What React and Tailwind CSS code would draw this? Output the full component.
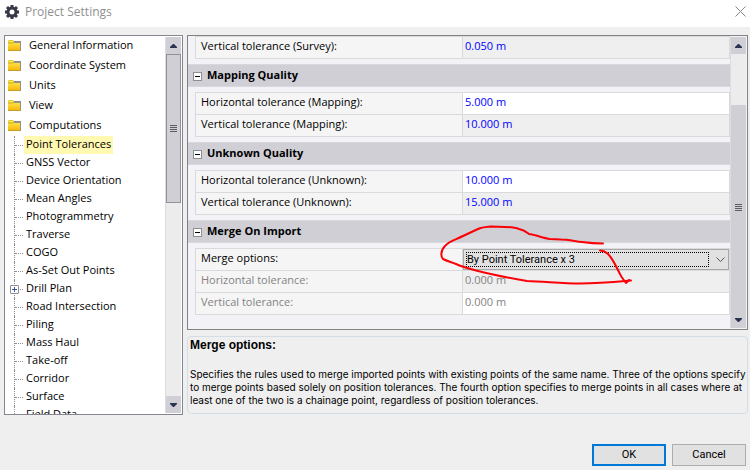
import { useState } from "react";

const folders = [
  "General Information",
  "Coordinate System",
  "Units",
  "View",
  "Computations",
];

const computations = [
  { name: "Point Tolerances" },
  { name: "GNSS Vector" },
  { name: "Device Orientation" },
  { name: "Mean Angles" },
  { name: "Photogrammetry" },
  { name: "Traverse" },
  { name: "COGO" },
  { name: "As-Set Out Points" },
  { name: "Drill Plan", expandable: true },
  { name: "Road Intersection" },
  { name: "Piling" },
  { name: "Mass Haul" },
  { name: "Take-off" },
  { name: "Corridor" },
  { name: "Surface" },
  { name: "Field Data" },
];

const groups = [
  {
    rows: [{ label: "Vertical tolerance (Survey):", value: "0.050 m", shaded: true }],
  },
  {
    title: "Mapping Quality",
    rows: [
      { label: "Horizontal tolerance (Mapping):", value: "5.000 m" },
      { label: "Vertical tolerance (Mapping):", value: "10.000 m", shaded: true },
    ],
  },
  {
    title: "Unknown Quality",
    rows: [
      { label: "Horizontal tolerance (Unknown):", value: "10.000 m" },
      { label: "Vertical tolerance (Unknown):", value: "15.000 m", shaded: true },
    ],
  },
  {
    title: "Merge On Import",
    rows: [
      { label: "Merge options:", options: ["By Point Tolerance x 3"] },
      { label: "Horizontal tolerance:", value: "0.000 m", shaded: true, disabled: true },
      { label: "Vertical tolerance:", value: "0.000 m", disabled: true },
    ],
  },
];

function GearIcon() {
  return (
    <svg viewBox="0 0 16 16" className="size-4" fill="none" stroke="#373745">
      <circle cx="8" cy="8" r="4" strokeWidth="3" />
      <g strokeWidth="3">
        <path d="M8 1v2M8 13v2M1 8h2M13 8h2" />
        <path d="M3 3l1.5 1.5M11.5 11.5L13 13M3 13l1.5-1.5M11.5 4.5L13 3" />
      </g>
    </svg>
  );
}

function FolderIcon() {
  return (
    <svg viewBox="0 0 14 12" className="h-3 w-3.5 shrink-0">
      <defs>
        <linearGradient id="folder" x1="0" y1="0" x2="0" y2="1">
          <stop offset="0" stopColor="#ffdf4a" />
          <stop offset="1" stopColor="#f7b500" />
        </linearGradient>
      </defs>
      <path d="M5 1h8v10H5z" fill="#92928c" />
      <path d="M0 1l1-1h4l1 2v2H0z" fill="#e3c62c" />
      <path d="M1 1h4v1H1z" fill="#fff04d" />
      <path d="M0 4h5l1-1h6v8H0z" fill="url(#folder)" />
      <path d="M0 10h13v1H0z" fill="#c99a2c" />
    </svg>
  );
}

function Arrow({ up }) {
  return (
    <svg viewBox="0 0 7 4" className="h-1 w-[7px]" fill="#2b3350">
      <path d={up ? "M3 0h1l3 3v1H0V3z" : "M0 0h7v1L4 4H3L0 1z"} />
    </svg>
  );
}

function Scrollbar({ children }) {
  return (
    <div className="flex w-4 shrink-0 flex-col border-l border-[#dcdcde] bg-[#ececec]">
      <button
        type="button"
        aria-label="Scroll up"
        className="flex h-[17px] shrink-0 items-center justify-center bg-[#cfcfd5]"
      >
        <Arrow up />
      </button>
      <div className="flex min-h-0 flex-1 flex-col">{children}</div>
      <button
        type="button"
        aria-label="Scroll down"
        className="flex h-[17px] shrink-0 items-center justify-center bg-[#cfcfd5]"
      >
        <Arrow />
      </button>
    </div>
  );
}

function Grip() {
  return (
    <svg viewBox="0 0 7 8" className="h-2 w-[7px]" stroke="#5d5d63">
      <path d="M0 .5h7M0 2.5h7M0 4.5h7M0 6.5h7" />
    </svg>
  );
}

function Tree() {
  const [selected, setSelected] = useState("Point Tolerances");

  return (
    <nav className="flex h-[380px] w-[179px] shrink-0 border border-[#828790] bg-white">
      <div className="min-w-0 flex-1 overflow-hidden">
        <ul>
          {folders.map((name) => (
            <li key={name} className="flex h-5 items-center gap-[7px] pl-[3px]">
              <FolderIcon />
              <button type="button" className="whitespace-nowrap pb-0.5 leading-4">
                {name}
              </button>
            </li>
          ))}
        </ul>
        <ul>
          {computations.map(({ name, expandable }) => (
            <li key={name} className="flex h-[18px] items-center gap-px">
              <span className="ml-[9px] flex h-full w-[9px] shrink-0 items-center border-l border-dotted border-[#8c8c8c]">
                {expandable && (
                  <button
                    type="button"
                    aria-label={`Expand ${name}`}
                    className="relative -left-[5px] flex size-[9px] shrink-0 items-center justify-center rounded-[1px] border border-[#8f8f8f] bg-white"
                  >
                    <svg viewBox="0 0 5 5" className="size-[5px]" stroke="#3a55a0">
                      <path d="M0 2.5h5M2.5 0v5" />
                    </svg>
                  </button>
                )}
                <span
                  className={`border-t border-dotted border-[#8c8c8c] ${
                    expandable ? "-ml-1 w-[3px] shrink-0" : "flex-1"
                  }`}
                />
              </span>
              <button
                type="button"
                onClick={() => setSelected(name)}
                className={`h-[18px] whitespace-nowrap px-0.5 pb-0.5 leading-4 ${
                  selected === name ? "bg-[#fff9b1]" : ""
                }`}
              >
                {name}
              </button>
            </li>
          ))}
        </ul>
      </div>
      <div className="flex py-px pr-px">
        <Scrollbar>
          <div className="flex h-[149px] items-center justify-center border border-[#919197] bg-[#cfcfd5]">
            <Grip />
          </div>
        </Scrollbar>
      </div>
    </nav>
  );
}

function PropertyRow({ row }) {
  const [option, setOption] = useState(row.options?.[0]);

  return (
    <tr className={`h-[22px] ${row.disabled ? "text-[#838383]" : ""}`}>
      <th
        scope="row"
        className="w-1/2 border border-[#dadadc] bg-[#f5f5f5] p-0 pb-1 pl-[5px] text-left font-normal leading-4"
      >
        {row.label}
      </th>
      <td
        className={`border border-[#dadadc] p-0 leading-4 ${
          row.shaded ? "bg-[#efefef]" : "bg-white"
        }`}
      >
        {row.options ? (
          <div className="relative h-[21px]">
            <select
              aria-label={row.label}
              value={option}
              onChange={(e) => setOption(e.target.value)}
              className="block h-[21px] w-full appearance-none border border-[#a8a8a8] bg-[#e1e1e1] px-[3px] font-['Roboto',sans-serif] text-[11px] text-black"
            >
              {row.options.map((name) => (
                <option key={name}>{name}</option>
              ))}
            </select>
            <span className="pointer-events-none absolute inset-y-[3px] left-[3px] right-5 border border-dotted border-black" />
            <svg
              viewBox="0 0 9 6"
              className="pointer-events-none absolute right-1 top-2 h-1.5 w-[9px]"
              fill="none"
              stroke="#555"
            >
              <path d="M.5 .5l4 4 4-4" />
            </svg>
          </div>
        ) : (
          <div className={`pb-1 pl-0.5 ${row.disabled ? "" : "text-[#0000ff]"}`}>
            {row.value}
          </div>
        )}
      </td>
    </tr>
  );
}

function PropertyGroup({ group }) {
  const [open, setOpen] = useState(true);

  return (
    <section>
      {group.title && (
        <h2 className="flex h-[23px] items-center gap-[5px] border-y border-[#d8d8dc] bg-[#cfcfd5] pl-[5px] font-bold">
          <button
            type="button"
            aria-label={`Collapse ${group.title}`}
            onClick={() => setOpen(!open)}
            className="mt-0.5 flex size-[9px] items-center justify-center border border-[#8f8f8f] bg-white"
          >
            <span className="h-px w-[5px] bg-black" />
          </button>
          <span className="pb-0.5 leading-4">{group.title}</span>
        </h2>
      )}
      {open && (
        <div className={group.title ? "py-[5px] pl-[7px]" : "pb-[5px] pl-[7px]"}>
          <table className="w-full table-fixed border-collapse">
            <tbody>
              {group.rows.map((row) => (
                <PropertyRow key={row.label} row={row} />
              ))}
            </tbody>
          </table>
        </div>
      )}
    </section>
  );
}

function RedMarkup() {
  return (
    <svg
      viewBox="436 220 200 70"
      className="pointer-events-none absolute left-[248px] top-[184px] h-[70px] w-[200px]"
      fill="none"
      stroke="#fb0007"
      strokeWidth="2"
      strokeLinecap="round"
      strokeLinejoin="round"
    >
      <path d="M603 243.500C596 243.500 589 243 582 242C574 241 567 239.500 561 239.500L550 239C543 238 536 235 529 234C525 231 524 230 519 229C511 226 498 227 491 226.500C486 227 482 227 478 229L463 236C455 240 449 241 445 246C440 251 441 257 443 259C447 261 451 262 456 264C472 271 498 276 527 281C545 281.500 562 283.500 580 283.500C598 283.500 614 282 631 280.500" />
      <path d="M600 250.500C604 250.500 606 252 608 254C614 260 617 269 620 274C621 277 624 280 626 283L629 280" />
    </svg>
  );
}

export default function App() {
  return (
    <div className="flex min-h-screen flex-col bg-[#efefef] font-['Open_Sans',sans-serif] text-[11px] text-black">
      <header className="flex h-[27px] items-center bg-white px-1 pb-1">
        <GearIcon />
        <h1 className="ml-[5px] flex-1 text-[12px] leading-4 text-[#8f8f8f]">
          Project Settings
        </h1>
        <button type="button" aria-label="Close">
          <svg viewBox="0 0 11 11" className="size-[11px]" stroke="#888">
            <path d="M.5 .5l10 10M10.500 .5l-10 10" />
          </svg>
        </button>
      </header>

      <main className="flex gap-1 pl-1 pr-0.5 pt-2">
        <Tree />
        <div className="flex min-w-0 flex-1 flex-col gap-1.5">
          <div className="relative flex h-[295px] border border-[#828282] bg-[#f2f2f7]">
            <div className="min-w-0 flex-1 overflow-hidden">
              {groups.map((group) => (
                <PropertyGroup key={group.title || "Survey"} group={group} />
              ))}
            </div>
            <div className="flex py-px pr-px">
              <Scrollbar>
                <div className="mt-[51px] flex flex-1 items-center justify-center bg-[#cfcfd5]">
                  <Grip />
                </div>
              </Scrollbar>
            </div>
            <RedMarkup />
          </div>
          <section className="h-[78px] rounded border border-[#d3dde5] pl-0.5">
            <h2 className="font-['Liberation_Sans',sans-serif] text-[12px] font-bold leading-4">
              Merge options:
            </h2>
            <p className="mt-[15px] font-['Inter',sans-serif] text-[10px] leading-[13px]">
              Specifies the rules used to merge imported points with existing points of the same name. Three of the options specify
              to merge points based solely on position tolerances. The fourth option specifies to merge points in all cases where at
              least one of the two is a chainage point, regardless of position tolerances.
            </p>
          </section>
        </div>
      </main>

      <footer className="mt-auto flex justify-end gap-1.5 pb-1 pr-1 font-['Roboto',sans-serif] text-[11px]">
        <button type="button" className="h-[22px] w-[74px] border-2 border-[#0078d7] bg-[#e1e1e1] leading-4">
          OK
        </button>
        <button type="button" className="h-[22px] w-[74px] border border-[#adadad] bg-[#e1e1e1] leading-4">
          Cancel
        </button>
      </footer>
    </div>
  );
}
